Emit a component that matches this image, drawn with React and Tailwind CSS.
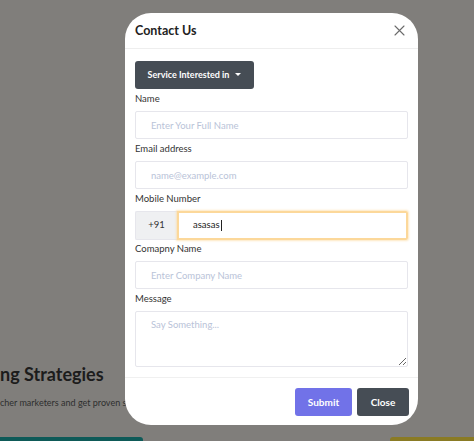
import React from "react";

const FONT = { fontFamily: "Lato, 'Noto Sans', sans-serif" };

function Field({ label, placeholder }) {
  return (
    <div className="flex flex-col mb-[2px]">
      <label className="h-[14px] leading-[15px] text-[9.5px] text-[#333] mb-[6px]">{label}</label>
      <input
        placeholder={placeholder}
        className="h-[28px] w-full border border-[#e6e6ec] rounded-[2px] px-[15px] text-[9.5px] text-[#222] placeholder:text-[#b9c3d8] outline-none bg-white"
      />
    </div>
  );
}

export default function App() {
  return (
    <div className="relative w-full h-[441px] overflow-hidden bg-[#807e7b]" style={FONT}>
      {/* page behind the overlay */}
      <div className="absolute left-0 top-[362px]">
        <h2 className="text-[18px] font-bold text-[#1c1c1c] leading-[24px]">ng Strategies</h2>
      </div>
      <div className="absolute left-0 top-[396px] text-[9px] text-[#2e2e2e] whitespace-nowrap">
        cher marketers and get proven st
      </div>
      <div className="absolute left-0 right-0 bottom-0 h-[4px] flex">
        <div className="w-[143px] bg-[#0e5a58] rounded-tr-[3px]" />
        <div className="flex-1" />
        <div className="w-[84px] bg-[#8a7b24] rounded-tl-[3px]" />
      </div>

      {/* modal */}
      <div className="absolute left-[125px] top-[13px] w-[293px] h-[412px] bg-white rounded-[26px] flex flex-col overflow-hidden">
        <div className="h-[36px] flex items-center justify-between px-[10px] border-b border-[#eeeeee]">
          <h5 className="text-[12.5px] font-bold text-[#222] pt-[1px]">Contact Us</h5>
          <button className="w-[16px] h-[16px] flex items-center justify-center mr-[1px]">
            <svg width="11" height="11" viewBox="0 0 11 11">
              <path d="M1 1L10 10M10 1L1 10" stroke="#6b6b6b" strokeWidth="1.1" strokeLinecap="round" />
            </svg>
          </button>
        </div>

        <div className="flex-1 px-[10px] pt-[12px] flex flex-col">
          <button className="w-[119px] h-[28px] bg-[#464d55] rounded-[3px] text-white text-[9px] font-bold flex items-center justify-center gap-[6px] mb-[2px]">
            Service Interested in
            <span className="w-0 h-0 border-l-[3px] border-r-[3px] border-t-[3px] border-l-transparent border-r-transparent border-t-white mb-[1px]" />
          </button>

          <Field label="Name" placeholder="Enter Your Full Name" />
          <Field label="Email address" placeholder="name@example.com" />

          <div className="flex flex-col mb-[2px]">
            <label className="h-[14px] leading-[15px] text-[9.5px] text-[#333] mb-[6px]">Mobile Number</label>
            <div className="flex h-[29px]">
              <div className="w-[42px] bg-[#eff0f2] border border-[#e6e6ec] border-r-0 rounded-l-[2px] flex items-center justify-center text-[9.5px] text-[#333]">
                +91
              </div>
              <div className="flex-1 border-2 border-[#fcd89a] rounded-r-[2px] shadow-[0_0_2px_1px_rgba(252,216,154,0.6)] flex items-center pl-[14px] text-[9.5px] text-[#222]">
                asasas<span className="w-px h-[11px] bg-[#222] ml-px" />
              </div>
            </div>
          </div>

          <div className="mt-[-1px]">
            <Field label="Comapny Name" placeholder="Enter Company Name" />
          </div>

          <div className="flex flex-col">
            <label className="h-[14px] leading-[15px] text-[9.5px] text-[#333] mb-[6px]">Message</label>
            <textarea
              placeholder="Say Something..."
              className="h-[56px] w-full border border-[#e6e6ec] rounded-[2px] px-[15px] py-[6px] text-[9.5px] placeholder:text-[#b9c3d8] outline-none resize-y"
            />
          </div>
        </div>

        <div className="h-[48px] border-t border-[#f0f0f0] flex items-start justify-end gap-[5px] px-[9px] pt-[10px]">
          <button className="w-[57px] h-[28px] bg-[#7172e8] rounded-[3px] text-white text-[10px] font-bold">Submit</button>
          <button className="w-[52px] h-[28px] bg-[#464d55] rounded-[3px] text-white text-[10px] font-bold">Close</button>
        </div>
      </div>
    </div>
  );
}
